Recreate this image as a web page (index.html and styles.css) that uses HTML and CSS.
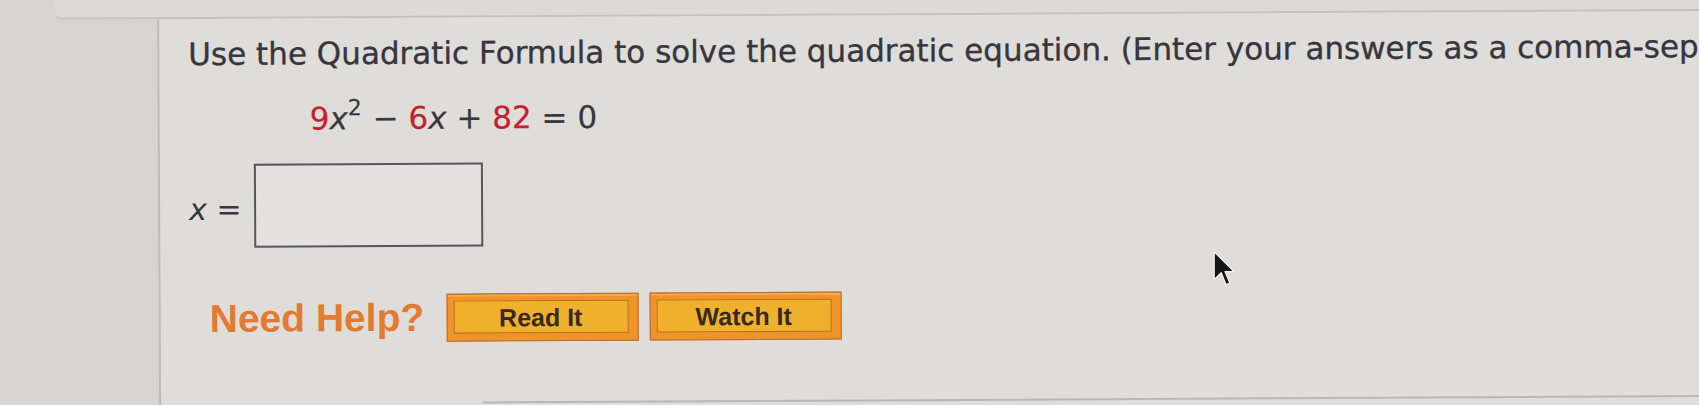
FILE: index.html
```html
<!DOCTYPE html>
<html lang="en">
<head>
<meta charset="utf-8">
<title>Quadratic Formula</title>
<link rel="stylesheet" href="styles.css">
</head>
<body>
<div class="page">
  <div class="topbar"></div>
  <div class="main">
    <div class="sidebar"></div>
    <div class="content">
      <p class="question">Use the Quadratic Formula to solve the quadratic equation. (Enter your answers as a comma-separated list.)</p>
      <p class="equation"><span class="num">9</span><i>x</i><sup>2</sup> − <span class="num">6</span><i>x</i> + <span class="num">82</span> = 0</p>
      <div class="answer-row">
        <span class="answer-label"><i>x</i> =</span>
        <span class="answer-box"></span>
      </div>
      <div class="help-row">
        <span class="need-help">Need Help?</span>
        <span class="help-btn"><span class="help-btn-inner">Read It</span></span>
        <span class="help-btn"><span class="help-btn-inner">Watch It</span></span>
      </div>
      <div class="next-panel"></div>
    </div>
  </div>
</div>
<svg class="cursor" width="26" height="40" viewBox="0 0 24 36" aria-hidden="true">
  <path d="M2 2 L2 28 L8.5 21.5 L13 32.5 L16.5 31 L12 20.5 L20.5 20.5 Z" fill="#141414" stroke="#f2f2f0" stroke-width="1.2" stroke-linejoin="round"/>
</svg>
</body>
</html>
```

FILE: styles.css
```css
html, body {
  margin: 0;
  padding: 0;
}
body {
  width: 1699px;
  height: 405px;
  overflow: hidden;
  background: #d6d4d0;
  position: relative;
  font-family: "DejaVu Sans", Verdana, sans-serif;
  color: #37353d;
}
.page {
  width: 1760px;
  transform: rotate(-0.3deg);
  transform-origin: 0 0;
}
.topbar {
  height: 18px;
  margin-left: 55px;
  background: #dcdad6;
  border-bottom: 2px solid #c3c1bd;
  border-bottom-left-radius: 7px;
}
.main {
  display: flex;
  height: 420px;
}
.sidebar {
  width: 157px;
  flex: none;
  background: #d6d4d0;
}
.content {
  flex: 1;
  background: #dfddd9;
  border-left: 2px solid #bcbab6;
  padding: 17px 0 0 29px;
}
.question {
  margin: 0;
  font-size: 31px;
  line-height: 36px;
  white-space: nowrap;
  -webkit-text-stroke: 0.35px #37353d;
}
.equation {
  margin: 29px 0 0 121px;
  font-size: 31px;
  line-height: 36px;
  white-space: nowrap;
  -webkit-text-stroke: 0.2px currentColor;
}
.equation i {
  font-style: italic;
}
.equation sup {
  font-size: 22px;
  line-height: 0;
  vertical-align: 14px;
  margin-right: 1px;
}
.num {
  color: #c4202e;
}
.answer-row {
  display: flex;
  align-items: center;
  margin-top: 27px;
}
.answer-label {
  width: 65px;
  font-size: 30px;
  line-height: 36px;
  padding-top: 8px;
  white-space: nowrap;
}
.answer-box {
  width: 225px;
  height: 80px;
  border: 2px solid #57565c;
  background: #e4e2de;
}
.help-row {
  display: flex;
  align-items: flex-start;
  margin-top: 47px;
  margin-left: 20px;
}
.need-help {
  font-family: "Liberation Sans", Arial, sans-serif;
  font-weight: bold;
  font-size: 39px;
  line-height: 48px;
  color: #e27a32;
  margin-right: 22px;
  white-space: nowrap;
}
.help-btn {
  width: 192px;
  height: 48px;
  box-sizing: border-box;
  border: 1px solid #b4683c;
  background: #ef9429;
  box-shadow: inset 0 2px 0 #f4ac4c;
  padding: 6px 9px 7px 6px;
  margin-right: 11px;
  display: flex;
}
.help-btn-inner {
  flex: 1;
  border: 1px solid #c06a1e;
  background: #efb12c;
  font-family: "Liberation Sans", Arial, sans-serif;
  font-weight: bold;
  font-size: 25px;
  line-height: 29px;
  padding-top: 2px;
  text-align: center;
  color: #372a22;
  white-space: nowrap;
}
.next-panel {
  margin: 60px 0 0 293px;
  border-top: 2px solid #b9b7b3;
  height: 10px;
}
.cursor {
  position: absolute;
  left: 1212px;
  top: 249px;
}
```
